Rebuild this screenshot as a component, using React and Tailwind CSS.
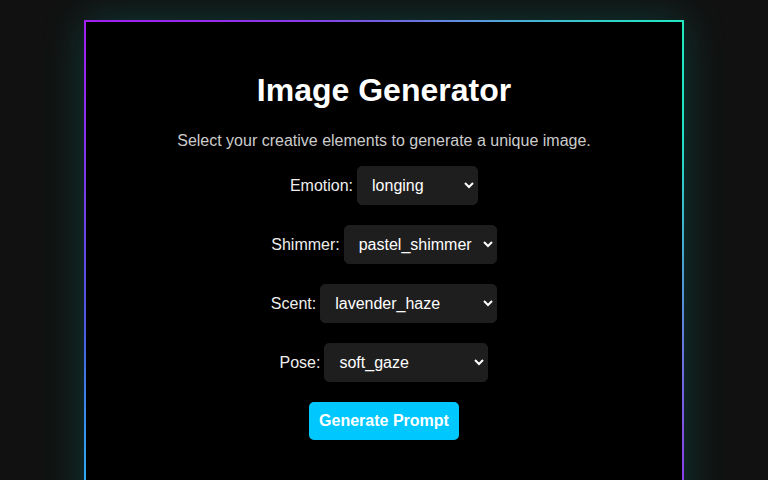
import React from "react";

const rows = [
  { label: "Emotion:", value: "longing", w: "w-[121px]" },
  { label: "Shimmer:", value: "pastel_shimmer", w: "w-[153px]" },
  { label: "Scent:", value: "lavender_haze", w: "w-[177px]" },
  { label: "Pose:", value: "soft_gaze", w: "w-[164px]" },
];

function Row({ label, value, w }) {
  return (
    <div className="flex items-center justify-center gap-[4px] h-[39px]">
      <label className="text-[16px] text-[#eeeeee]">{label}</label>
      <select
        defaultValue={value}
        className={`${w} h-[39px] rounded-[5px] bg-[#1e1e1e] text-white text-[16px] pl-[10px] pr-[2px] border border-[#1e1e1e] outline-none`}
      >
        <option value={value}>{value}</option>
      </select>
    </div>
  );
}

export default function App() {
  return (
    <div
      className="min-h-[480px] h-[480px] overflow-hidden bg-[#111111] pt-[20px]"
      style={{ fontFamily: '"Liberation Sans", Arial, sans-serif' }}
    >
      <div
        className="mx-auto w-[600px] h-[540px] p-[2px] shadow-[0_0_40px_rgba(0,210,190,0.22)]"
        style={{
          background:
            "conic-gradient(from 0deg at 50% 50%, #7060e0 0deg, #6090e0 16deg, #20e8c0 48deg, #22e0c4 62deg, #8a40e8 122deg, #6a70e8 180deg, #30a8f0 238deg, #4a5ce0 262deg, #a020f0 312deg, #8a3ae8 343deg, #7060e0 360deg)",
        }}
      >
        <div className="h-full w-full bg-black pt-[50px] flex flex-col items-center">
          <h1 className="text-[32px] leading-[37px] font-bold text-white">Image Generator</h1>
          <p className="mt-[23px] text-[16px] leading-[18px] text-[#cccccc]">
            Select your creative elements to generate a unique image.
          </p>
          <div className="mt-[16px] flex flex-col gap-[20px]">
            {rows.map((r) => (
              <Row key={r.label} {...r} />
            ))}
          </div>
          <button className="mt-[20px] h-[38px] w-[150px] rounded-[5px] bg-[#00c8ff] text-white font-bold text-[16px]">
            Generate Prompt
          </button>
        </div>
      </div>
    </div>
  );
}
